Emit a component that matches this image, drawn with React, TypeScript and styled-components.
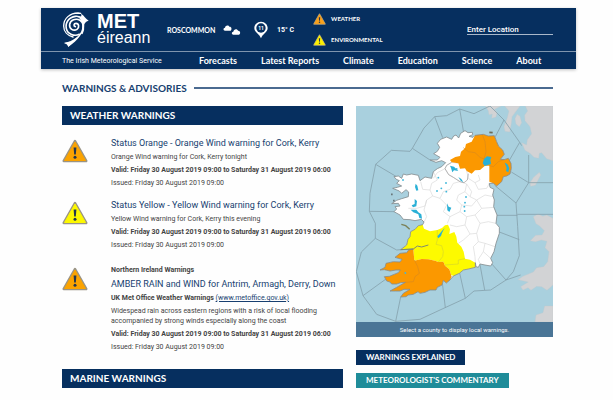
import styled, { createGlobalStyle } from "styled-components";

const GlobalStyle = createGlobalStyle`
  * {
    box-sizing: border-box;
  }
  body {
    margin: 0;
    background: #fefefe;
    color: #444;
    font-family: Roboto, "Liberation Sans", sans-serif;
    font-size: 8px;
    line-height: 10px;
  }
`;

const StyledPage = styled.div`
  padding: 8px 37px 0 41px;
`;

const StyledHeader = styled.header`
  background: #062f5f;
  color: white;
  box-shadow: 0 1px 3px rgba(0, 0, 0, 0.25);
`;

const StyledTopBar = styled.div`
  display: flex;
  align-items: center;
  height: 43px;
  padding: 0 23px 0 21px;
`;

const StyledLogo = styled.a`
  display: flex;
  align-items: center;
  width: 105px;
  color: white;
  text-decoration: none;
`;

const StyledLogoText = styled.span`
  display: flex;
  flex-direction: column;
  margin-left: 8px;
`;

const StyledLogoMet = styled.span`
  font-family: "Liberation Sans", sans-serif;
  font-weight: bold;
  font-size: 20px;
  line-height: 17px;
`;

const StyledLogoName = styled.span`
  font-family: "Liberation Sans", sans-serif;
  font-size: 16px;
  line-height: 16px;
`;

const StyledCurrent = styled.div`
  display: flex;
  align-items: center;
  font-weight: bold;
  font-size: 7px;
`;

const StyledPlace = styled.span`
  width: 56px;
  font-family: Lato, sans-serif;
`;

const StyledWind = styled.span`
  display: flex;
  margin: 0 9px 0 13px;
`;

const StyledAlerts = styled.div`
  display: flex;
  flex-direction: column;
  gap: 9px;
  margin-left: 19px;
`;

const StyledAlert = styled.a`
  display: flex;
  align-items: center;
  gap: 5px;
  color: white;
  font-family: Lato, sans-serif;
  font-weight: bold;
  font-size: 6px;
  line-height: 12px;
  text-decoration: none;
`;

const StyledSearch = styled.input`
  width: 86px;
  height: 11px;
  margin-left: auto;
  padding: 0;
  border: none;
  border-bottom: 1px solid #a9b8ca;
  outline: none;
  background: transparent;
  color: white;
  font-family: Roboto, sans-serif;
  font-size: 8px;
  font-weight: 500;
  &::placeholder {
    color: white;
    opacity: 1;
  }
`;

const StyledNavBar = styled.div`
  display: flex;
  align-items: center;
  height: 18px;
  padding: 0 21px;
  border-top: 1px solid #7f95ae;
`;

const StyledTagline = styled.span`
  width: 137px;
  font-size: 7px;
  font-weight: normal;
`;

const StyledNav = styled.nav`
  display: flex;
  gap: 24px;
  a {
    color: white;
    font-family: Lato, sans-serif;
    font-size: 9px;
    font-weight: bold;
    text-decoration: none;
    white-space: nowrap;
  }
`;

const StyledMain = styled.main`
  padding: 12px 23px 0 21px;
`;

const StyledPageTitle = styled.h1`
  display: flex;
  align-items: center;
  gap: 7px;
  margin: 0 0 11px;
  color: #173f70;
  font-family: Lato, sans-serif;
  font-size: 10px;
  font-weight: bold;
  line-height: 14px;
  &::after {
    content: "";
    flex-grow: 1;
    height: 2px;
    background: #4a6a90;
  }
`;

const StyledColumns = styled.div`
  display: grid;
  grid-template-columns: minmax(0, 281fr) minmax(0, 197fr);
  gap: 13px;
  align-items: start;
`;

const StyledSectionTitle = styled.h2`
  margin: 0;
  padding: 0 8px;
  background: #062f5f;
  color: white;
  font-family: Lato, sans-serif;
  font-size: 10px;
  font-weight: bold;
  line-height: 19px;
`;

const StyledWarnings = styled.div`
  display: flex;
  flex-direction: column;
  gap: 11px;
  padding: 12px 0 17px;
`;

const StyledWarning = styled.article<{ $spaced?: boolean }>`
  display: grid;
  grid-template-columns: 49px minmax(0, 1fr);
  align-items: start;
  margin-top: ${(props) => (props.$spaced ? "4px" : "0")};
  > svg {
    margin-top: 2px;
  }
`;

const StyledWarningBody = styled.div`
  display: flex;
  flex-direction: column;
  gap: 3px;
`;

const StyledWarningTitle = styled.h3`
  margin: 0;
  color: #173f70;
  font-size: 9px;
  font-weight: normal;
  line-height: 12px;
  white-space: nowrap;
`;

const StyledText = styled.p<{ $bold?: boolean }>`
  margin: 0;
  font-size: 7px;
  font-weight: ${(props) => (props.$bold ? "bold" : "normal")};
  a {
    color: #173f70;
    font-weight: normal;
  }
`;

const StyledFigure = styled.figure`
  margin: 0 0 13px;
  svg {
    display: block;
    width: 100%;
    height: auto;
  }
`;

const StyledCaption = styled.figcaption`
  background: #4a7596;
  color: white;
  font-size: 6px;
  line-height: 15px;
  text-align: center;
`;

const StyledLinks = styled.div`
  display: flex;
  flex-direction: column;
  align-items: flex-start;
  gap: 8px;
`;

const StyledLinkButton = styled.a<{ $color: string }>`
  padding: 0 10px;
  background: ${(props) => props.$color};
  color: white;
  font-family: Lato, sans-serif;
  font-size: 8px;
  font-weight: bold;
  line-height: 15px;
  text-decoration: none;
`;

const WarningIcon = ({ color, width }: { color: string; width: number }) => (
  <svg width={width} viewBox="0 0 26 24" aria-hidden="true">
    <path
      d="M13 2.2 L24.2 22 H1.8 Z"
      fill={color}
      stroke="#9a9484"
      strokeWidth="2.6"
      strokeLinejoin="round"
    />
    <path
      d="M13 3 L23.5 21.5 H2.5 Z"
      fill={color}
      stroke={color}
      strokeWidth="1"
      strokeLinejoin="round"
    />
    <path d="M11.6 8.4 H14.4 L13.8 15.6 H12.2 Z" fill="#23364f" />
    <circle cx="13" cy="18.3" r="1.5" fill="#23364f" />
  </svg>
);

const LogoMark = () => (
  <svg width="27" height="38" viewBox="0 0 81 114" fill="none" aria-hidden="true">
    <g stroke="white" strokeLinecap="round">
      <path
        d="M40 47 C34 46 35 37 42 37 C51 37 53 50 45 55 C34 62 21 53 23 40 C25 26 42 21 54 28 C66 35 67 54 60 67"
        strokeWidth="5"
      />
      <path
        d="M52 70 C37 77 17 70 13 53 C9 35 21 18 40 16 C48 15 57 18 65 24"
        strokeWidth="5"
      />
      <path d="M33 78 C17 74 5 62 5 45 C5 22 24 6 48 6 L56 7" strokeWidth="4" />
    </g>
    <path
      d="M57 8 C67 13 70 23 80 29 C73 30 70 34 67 40 C66 66 48 88 19 107 C18 102 12 97 6 96 C32 91 55 76 60 54 C62 39 60 27 48 19 C57 20 60 16 57 8 Z"
      fill="white"
    />
    <path d="M22 92 L6 96 C12 97 18 102 19 108 L32 95 Z" fill="white" />
  </svg>
);

const CloudIcon = () => (
  <svg width="18" height="12" viewBox="0 0 54 36" fill="white" aria-hidden="true">
    <path d="M6 20 C0 20 0 11 6 11 C7 3 17 2 19 8 C25 7 28 15 23 20 Z" />
    <path d="M31 32 C25 32 25 23 31 23 C32 14 43 13 45 20 C52 19 54 29 48 32 Z" />
  </svg>
);

const PinIcon = () => (
  <svg width="14" height="18" viewBox="0 0 42 54" aria-hidden="true">
    <path d="M21 2 C9 2 1 11 1 21 C1 34 16 38 21 52 C26 38 41 34 41 21 C41 11 33 2 21 2 Z" fill="white" />
    <circle cx="21" cy="21" r="14" fill="#062f5f" />
    <text x="21" y="26" fill="white" fontSize="15" fontFamily="Roboto" textAnchor="middle">
      11
    </text>
  </svg>
);

const ireland =
  "M240 180 L262 180 270 172 251 161 262 154 269 142 262 130 272 118 290 111 305 118 311 108 318 105 326 114 332 100 345 92 354 98 367 97 368 104 357 109 369 112 375 106 400 103 415 108 433 107 440 125 446 139 458 150 463 163 451 178 462 179 475 175 483 190 484 205 480 222 470 228 460 230 455 245 440 258 430 250 418 250 420 262 432 268 428 285 433 300 431 320 441 345 438 370 448 382 448 400 438 430 432 455 422 475 428 488 422 498 405 495 390 492 385 502 378 500 376 488 376 502 355 507 340 510 328 520 310 528 300 540 289 549 280 541 276 555 262 562 258 570 240 570 225 577 210 580 204 575 190 583 175 585 168 590 152 591 160 580 180 568 162 568 150 573 136 573 120 573 140 562 166 547 152 548 140 552 125 552 120 546 110 543 103 530 118 529 145 518 151 510 138 510 120 513 103 509 90 510 105 502 108 490 130 485 150 486 156 478 135 472 150 460 170 458 176 450 190 447 172 448 152 449 170 435 174 418 180 410 182 395 195 388 205 377 218 374 222 366 214 358 195 362 180 359 160 358 150 345 132 335 140 327 135 320 150 318 145 310 125 311 140 301 155 296 175 290 176 276 168 269 155 280 148 273 128 265 142 262 155 258 140 250 148 242 139 238 132 230 145 228 155 235 160 222 170 225 185 222 205 226 210 242 225 231 245 235 250 215 262 206 275 200 287 188 275 182 258 187 Z";

const north =
  "M300 180 L316 171 330 168 333 155 345 145 348 132 365 125 375 106 400 103 415 108 433 107 440 125 446 139 458 150 463 163 451 178 462 179 475 175 483 190 484 205 480 222 470 228 460 230 455 245 440 258 430 250 418 245 418 197 405 197 390 210 375 211 365 221 350 213 345 205 330 206 325 190 305 187 Z";

const southWest =
  "M190 447 L193 482 215 477 235 478 255 482 265 486 280 485 285 497 298 508 305 530 300 540 289 549 280 541 276 555 262 562 258 570 240 570 225 577 210 580 204 575 190 583 175 585 168 590 152 591 160 580 180 568 162 568 150 573 136 573 120 573 140 562 166 547 152 548 140 552 125 552 120 546 110 543 103 530 118 529 145 518 151 510 138 510 120 513 103 509 90 510 105 502 108 490 130 485 150 486 156 478 135 472 150 460 170 458 176 450 Z";

const yellow =
  "M152 449 L170 435 174 418 180 410 182 395 195 388 205 377 218 374 222 386 240 394 262 390 276 384 285 376 294 374 300 388 298 402 313 396 319 410 322 428 334 440 341 455 345 476 360 479 376 488 376 502 355 507 340 510 328 520 310 528 303 524 298 508 285 497 280 485 265 486 255 482 235 478 215 477 193 482 190 447 Z";

const land = [
  "M526 18 L609 18 609 182 590 176 575 158 568 160 566 175 552 172 540 160 525 151 515 128 530 135 532 119 545 101 540 80 525 62 524 45 533 33 Z",
  "M406 18 L415 32 417 44 427 42 425 55 438 51 441 38 434 28 453 18 Z",
  "M464 18 L477 33 472 53 462 80 465 94 479 96 484 70 486 50 495 38 510 18 Z",
  "M501 43 L510 49 515 68 508 80 498 72 495 56 Z",
  "M568 217 L572 225 556 256 542 259 540 248 551 232 Z",
  "M550 350 L564 342 579 349 590 345 609 355 609 555 591 571 575 560 560 559 543 571 534 563 519 570 512 560 535 546 504 539 519 529 550 516 560 503 581 500 593 485 597 455 585 443 591 424 574 420 556 425 541 422 557 406 576 405 583 392 568 377 558 371 Z",
  "M555 666 L558 645 579 638 584 618 609 618 609 666 Z",
];

const seaAreas =
  "M329 27 L290 47 254 50 222 84 187 145 180 154 124 151 77 193 60 280 58 334 76 370 76 415 34 456 19 515 39 587 80 643 137 664 210 658 270 630 346 595 372 573 422 570 468 540 490 515 508 467 503 380 498 309 434 256 M254 50 L278 113 M187 145 L240 180 M77 193 L138 229 M58 334 L132 335 M76 415 L140 450 152 449 M39 587 L112 534 M137 664 L152 591 M286 623 L276 540 M346 595 L328 515 M404 570 L390 494 M468 540 L422 488 M508 419 L448 396 M502 346 L441 346 M498 309 L536 248 484 216 M329 27 L341 98 M329 27 L372 41 420 18 M420 18 L462 60 436 110 M462 60 L509 127 478 181 M509 127 L515 137 M536 248 L536 165 M536 248 L609 248 M502 343 L609 343 M468 540 L512 525";

const counties =
  "M325 190 L305 187 290 196 285 206 262 218 250 235 M285 206 L296 224 310 232 330 245 M250 215 L262 240 245 250 240 270 218 268 212 245 M240 270 L248 288 230 300 225 318 200 325 175 325 M248 288 L270 295 280 275 300 268 310 250 330 245 M270 295 L290 315 280 335 300 350 292 370 M230 300 L222 330 230 350 222 366 M330 245 L350 252 345 275 325 285 320 300 335 315 330 335 300 350 M350 213 L355 235 375 248 390 240 385 225 M375 248 L385 268 410 265 418 250 M350 252 L365 275 360 290 345 275 M360 290 L380 300 405 285 430 290 M335 315 L365 318 380 300 395 325 432 322 M330 335 L350 350 375 345 395 325 M350 350 L345 375 320 380 300 375 M375 345 L390 370 415 365 438 370 M390 370 L380 400 360 402 345 375 M380 400 L385 425 405 430 435 440 M360 402 L340 420 325 430 M385 425 L370 440 375 470 376 488 M405 430 L400 455 385 478 390 492 M400 455 L422 475";

const lakes = [
  "M402 177 L411 169 424 171 421 180 423 192 413 195 404 198 398 190 Z",
  "M464 188 L472 192 478 204 475 217 468 213 470 203 Z",
  "M300 197 L312 200 325 213 312 211 307 217 303 204 Z",
  "M325 231 L334 237 340 247 332 242 Z",
  "M197 251 L202 257 205 271 199 272 195 261 Z",
  "M194 297 L201 303 199 319 189 322 185 316 194 312 Z",
  "M182 329 L199 329 205 337 214 343 216 356 208 354 205 343 190 337 Z",
  "M291 310 L296 320 304 323 298 336 292 331 Z",
  "M284 383 L276 399 273 408 265 415 262 409 270 400 Z",
];

const smallLakes = [
  [265, 233], [288, 249], [261, 273], [274, 265], [159, 240], [289, 275],
  [348, 291], [345, 308], [343, 320], [344, 333], [166, 519], [320, 207],
];

const WarningMap = () => (
  <svg viewBox="18 18 591 648" role="img" aria-label="Map of county warnings">
    <rect x="18" y="18" width="591" height="648" fill="#a9d0de" />
    {land.map((d) => (
      <path key={d} d={d} fill="#d2d3d5" stroke="#c2c9cc" strokeWidth="1" />
    ))}
    <path d={seaAreas} fill="none" stroke="#84a0ab" strokeWidth="2.4" />
    <path d={ireland} fill="white" />
    <path d={counties} fill="none" stroke="#d9d9d9" strokeWidth="2" strokeLinejoin="round" />
    <path d={yellow} fill="#fdfa00" />
    <path d={southWest} fill="#fb9800" />
    <path d={north} fill="#fb9800" />
    <path
      d="M340 143 L355 155 375 158 390 172 402 177 M397 104 L405 125 408 155 402 177 M418 197 L430 200 445 185 462 179"
      fill="none"
      stroke="#d98a1c"
      strokeWidth="2"
    />
    <path
      d="M193 480 L203 500 208 520 195 530 190 545 166 547"
      fill="none"
      stroke="#d98a1c"
      strokeWidth="2"
    />
    <path
      d="M262 390 L262 420 258 433 M258 433 L275 437 280 455 278 470 265 486 M285 495 L325 492 325 480 345 476"
      fill="none"
      stroke="#d6d62a"
      strokeWidth="2"
    />
    <path d={ireland} fill="none" stroke="#82898b" strokeWidth="2.4" strokeLinejoin="round" />
    <path
      d="M305 187 L290 196 285 206 296 224 310 232 330 245 342 248 352 240 355 221"
      fill="none"
      stroke="#999"
      strokeWidth="2"
    />
    <path
      d="M152 449 L190 447 202 438 215 441 235 435"
      fill="none"
      stroke="#7d8a72"
      strokeWidth="3"
    />
    <path d="M154 373 L167 377 179 388" fill="none" stroke="#7b8158" strokeWidth="4" />
    <path d="M418 97 L428 98" fill="none" stroke="#6f6a55" strokeWidth="5" />
    <path d="M123 283 h5 M129 302 h5" fill="none" stroke="#697679" strokeWidth="5" />
    {lakes.map((d) => (
      <path key={d} d={d} fill="#2ab0d6" />
    ))}
    {smallLakes.map(([x, y]) => (
      <circle key={`${x}-${y}`} cx={x} cy={y} r="2.8" fill="#3fb7da" />
    ))}
  </svg>
);

const navItems = ["Forecasts", "Latest Reports", "Climate", "Education", "Science", "About"];

const valid = "Valid: Friday 30 August 2019 09:00 to Saturday 31 August 2019 06:00";
const issued = "Issued: Friday 30 August 2019 09:00";

const App = () => {
  return (
    <>
      <GlobalStyle />
      <StyledPage>
        <StyledHeader>
          <StyledTopBar>
            <StyledLogo href="#">
              <LogoMark />
              <StyledLogoText>
                <StyledLogoMet>MET</StyledLogoMet>
                <StyledLogoName>éireann</StyledLogoName>
              </StyledLogoText>
            </StyledLogo>
            <StyledCurrent>
              <StyledPlace>ROSCOMMON</StyledPlace>
              <CloudIcon />
              <StyledWind>
                <PinIcon />
              </StyledWind>
              <span>15° C</span>
            </StyledCurrent>
            <StyledAlerts>
              <StyledAlert href="#">
                <WarningIcon color="#f9a11b" width={13} />
                WEATHER
              </StyledAlert>
              <StyledAlert href="#">
                <WarningIcon color="#fdf000" width={13} />
                ENVIRONMENTAL
              </StyledAlert>
            </StyledAlerts>
            <StyledSearch type="text" placeholder="Enter Location" aria-label="Enter Location" />
          </StyledTopBar>
          <StyledNavBar>
            <StyledTagline>The Irish Meteorological Service</StyledTagline>
            <StyledNav>
              {navItems.map((item) => (
                <a key={item} href="#">
                  {item}
                </a>
              ))}
            </StyledNav>
          </StyledNavBar>
        </StyledHeader>
        <StyledMain>
          <StyledPageTitle>WARNINGS &amp; ADVISORIES</StyledPageTitle>
          <StyledColumns>
            <section>
              <StyledSectionTitle>WEATHER WARNINGS</StyledSectionTitle>
              <StyledWarnings>
                <StyledWarning>
                  <WarningIcon color="#fba300" width={26} />
                  <StyledWarningBody>
                    <StyledWarningTitle>
                      Status Orange - Orange Wind warning for Cork, Kerry
                    </StyledWarningTitle>
                    <StyledText>Orange Wind warning for Cork, Kerry tonight</StyledText>
                    <StyledText $bold>{valid}</StyledText>
                    <StyledText>{issued}</StyledText>
                  </StyledWarningBody>
                </StyledWarning>
                <StyledWarning>
                  <WarningIcon color="#fdf800" width={26} />
                  <StyledWarningBody>
                    <StyledWarningTitle>
                      Status Yellow - Yellow Wind warning for Cork, Kerry
                    </StyledWarningTitle>
                    <StyledText>Yellow Wind warning for Cork, Kerry this evening</StyledText>
                    <StyledText $bold>{valid}</StyledText>
                    <StyledText>{issued}</StyledText>
                  </StyledWarningBody>
                </StyledWarning>
                <StyledWarning $spaced>
                  <WarningIcon color="#fba300" width={26} />
                  <StyledWarningBody>
                    <StyledText $bold>Northern Ireland Warnings</StyledText>
                    <StyledWarningTitle>
                      AMBER RAIN and WIND for Antrim, Armagh, Derry, Down
                    </StyledWarningTitle>
                    <StyledText $bold>
                      UK Met Office Weather Warnings <a href="#">(www.metoffice.gov.uk)</a>
                    </StyledText>
                    <StyledText>
                      Widespead rain across eastern regions with a risk of local flooding
                      <br />
                      accompanied by strong winds especially along the coast
                    </StyledText>
                    <StyledText $bold>{valid}</StyledText>
                    <StyledText>{issued}</StyledText>
                  </StyledWarningBody>
                </StyledWarning>
              </StyledWarnings>
              <StyledSectionTitle>MARINE WARNINGS</StyledSectionTitle>
            </section>
            <aside>
              <StyledFigure>
                <WarningMap />
                <StyledCaption>Select a county to display local warnings.</StyledCaption>
              </StyledFigure>
              <StyledLinks>
                <StyledLinkButton href="#" $color="#062f5f">
                  WARNINGS EXPLAINED
                </StyledLinkButton>
                <StyledLinkButton href="#" $color="#1f8c99">
                  METEOROLOGIST'S COMMENTARY
                </StyledLinkButton>
              </StyledLinks>
            </aside>
          </StyledColumns>
        </StyledMain>
      </StyledPage>
    </>
  );
};

export default App;
